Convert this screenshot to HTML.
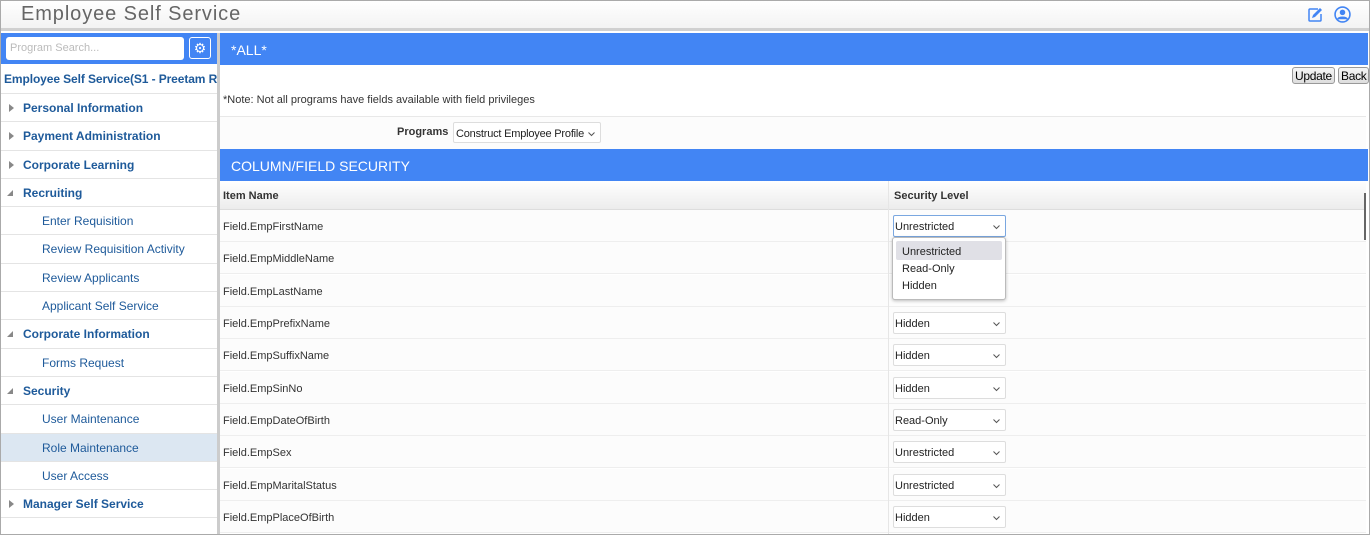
<!DOCTYPE html>
<html><head><style>
*{box-sizing:border-box;margin:0;padding:0}
body{width:1370px;height:535px;overflow:hidden;background:#fff;font-family:"Liberation Sans",Arial,sans-serif;position:relative}
.frame{position:absolute;left:0;top:0;width:1370px;height:535px;border:1px solid #aaa;z-index:5;pointer-events:none}
.hdr{position:absolute;left:1px;top:1px;width:1368px;height:30px;background:linear-gradient(#fff,#f3f3f3);border-bottom:3px solid #d0d0d0}
.hdr .t{position:absolute;left:20px;top:2px;font-size:20px;color:#666;letter-spacing:.9px}
.side{position:absolute;left:1px;top:33px;width:219px;height:501px;background:#fff;border-right:3px solid #ccc;z-index:2}
.sb{height:31px;background:#4285f4;position:relative}
.sb .in{position:absolute;left:5px;top:4px;width:178px;height:23px;background:#fff;border-radius:3px;font-size:11px;color:#bbb;padding:5px 4px}
.sb .g{position:absolute;left:188px;top:4px;width:22px;height:22px;border:1px solid #fff;border-radius:3px;color:#fff;font-size:14px;text-align:center;line-height:20px}
.ttl{height:30px;font-size:12px;font-weight:bold;color:#1e5a9a;padding:8px 3px;border-bottom:1px solid #e4e4e4;white-space:nowrap;overflow:hidden;letter-spacing:-.1px;width:216px}
.it{height:28.3px;border-bottom:1px solid #e4e4e4;font-size:12px;color:#1e5a9a;padding-top:7px;position:relative;width:216px}
.it.b{font-weight:bold;padding-left:22px}
.it.s{padding-left:41px}
.it.sel{background:#dce7f2}
.it.b:before{content:"";position:absolute;left:8px;top:10px;border-left:5px solid #888;border-top:4px solid transparent;border-bottom:4px solid transparent}
.it.o:before{border:none;width:0;height:0;border-right:6px solid #888;border-top:6px solid transparent;left:6px;top:11px}
.main{position:absolute;left:220px;top:33px;width:1148px;height:501px}
.bar{background:#4285f4;color:#fff;font-size:14px;padding:9px 11px;height:32px}
.btn{position:absolute;top:34px;height:17px;border:1px solid #999;border-radius:3px;background:linear-gradient(#f6f6f6,#ddd);font-size:12px;padding:1px 2px;letter-spacing:-.3px}
.sel2{position:absolute;height:22px;border:1px solid #ddd;border-radius:2px;background:#fff;font-size:11px;color:#222;padding:5px 1px 3px}
.sel2 svg{position:absolute;right:5px;top:9px}
.th{position:absolute;left:0;top:148px;width:1146px;height:29px;background:linear-gradient(#fff,#ececec);border-bottom:1px solid #ddd;font-size:11px;font-weight:bold;color:#333}
.row{position:absolute;left:0;width:1146px;height:32.3px;border-bottom:1px solid #eee;background:#fcfcfc;font-size:11px;color:#333}
.row span{position:absolute;left:3px;top:11px}
.vl{position:absolute;left:668px;top:148px;width:1px;height:353px;background:#e6e6e6}
</style></head><body>
<div class="frame"></div>
<div class="hdr"><div class="t">Employee Self Service</div>
<svg style="position:absolute;left:1306px;top:6px" width="16" height="16" viewBox="0 0 16 16"><path d="M11 2H3a1 1 0 0 0-1 1v10a1 1 0 0 0 1 1h10a1 1 0 0 0 1-1V7" fill="none" stroke="#4285f4" stroke-width="1.5"/><path d="M13 1l2 2-7 7-3 1 1-3z" fill="#4285f4"/></svg>
<svg style="position:absolute;left:1333px;top:5px" width="17" height="17" viewBox="0 0 16 16"><circle cx="8" cy="8" r="7" fill="none" stroke="#4285f4" stroke-width="1.5"/><circle cx="8" cy="6" r="2.6" fill="#4285f4"/><path d="M3.5 12.5c1-2.5 8-2.5 9 0" fill="#4285f4" stroke="#4285f4" stroke-width="1.5"/></svg>
</div>
<div class="side">
<div class="sb"><div class="in">Program Search...</div><div class="g">&#9881;</div></div>
<div class="ttl">Employee Self Service(S1 - Preetam Reddy)</div>
<div class="it b">Personal Information</div>
<div class="it b">Payment Administration</div>
<div class="it b">Corporate Learning</div>
<div class="it b o">Recruiting</div>
<div class="it s">Enter Requisition</div>
<div class="it s">Review Requisition Activity</div>
<div class="it s">Review Applicants</div>
<div class="it s">Applicant Self Service</div>
<div class="it b o">Corporate Information</div>
<div class="it s">Forms Request</div>
<div class="it b o">Security</div>
<div class="it s">User Maintenance</div>
<div class="it s sel">Role Maintenance</div>
<div class="it s">User Access</div>
<div class="it b">Manager Self Service</div>
</div>
<div class="main">
<div class="bar">*ALL*</div>
<div class="btn" style="left:1072px">Update</div>
<div class="btn" style="left:1118px">Back</div>
<div style="position:absolute;left:3px;top:61px;font-size:11px;color:#333">*Note: Not all programs have fields available with field privileges</div>
<div style="position:absolute;left:0;top:83px;width:1146px;height:33px;border-top:1px solid #e8e8e8;background:#fcfcfc">
<div style="position:absolute;left:177px;top:9px;font-size:11px;font-weight:bold;color:#333">Programs</div>
<div class="sel2" style="left:233px;top:5px;width:148px;height:21px;padding-left:2px;letter-spacing:-.2px">Construct Employee Profile<svg width="7" height="5" viewBox="0 0 7 5"><path d="M.5 .5l3 3 3-3" fill="none" stroke="#555"/></svg></div></div>
<div class="bar" style="position:absolute;top:116px;width:1148px">COLUMN/FIELD SECURITY</div>
<div class="th"><span style="position:absolute;left:3px;top:9px">Item Name</span><span style="position:absolute;left:674px;top:9px">Security Level</span></div>
<div style="position:absolute;left:1144px;top:160px;width:2px;height:47px;background:#666;z-index:3"></div>
<div class="row" style="top:177px"><span>Field.EmpFirstName</span></div>
<div class="row" style="top:209px"><span>Field.EmpMiddleName</span></div>
<div class="row" style="top:242px"><span>Field.EmpLastName</span></div>
<div class="row" style="top:274px"><span>Field.EmpPrefixName</span></div>
<div class="row" style="top:306px"><span>Field.EmpSuffixName</span></div>
<div class="row" style="top:339px"><span>Field.EmpSinNo</span></div>
<div class="row" style="top:371px"><span>Field.EmpDateOfBirth</span></div>
<div class="row" style="top:403px"><span>Field.EmpSex</span></div>
<div class="row" style="top:436px"><span>Field.EmpMaritalStatus</span></div>
<div class="row" style="top:468px"><span>Field.EmpPlaceOfBirth</span></div>
<div class="vl"></div>
<div class="sel2" style="left:673px;top:182px;width:113px;border-color:#7aa7e0">Unrestricted<svg width="7" height="5" viewBox="0 0 7 5"><path d="M.5 .5l3 3 3-3" fill="none" stroke="#555"/></svg></div>
<div class="sel2" style="left:673px;top:279px;width:113px">Hidden<svg width="7" height="5" viewBox="0 0 7 5"><path d="M.5 .5l3 3 3-3" fill="none" stroke="#555"/></svg></div>
<div class="sel2" style="left:673px;top:311px;width:113px">Hidden<svg width="7" height="5" viewBox="0 0 7 5"><path d="M.5 .5l3 3 3-3" fill="none" stroke="#555"/></svg></div>
<div class="sel2" style="left:673px;top:344px;width:113px">Hidden<svg width="7" height="5" viewBox="0 0 7 5"><path d="M.5 .5l3 3 3-3" fill="none" stroke="#555"/></svg></div>
<div class="sel2" style="left:673px;top:376px;width:113px">Read-Only<svg width="7" height="5" viewBox="0 0 7 5"><path d="M.5 .5l3 3 3-3" fill="none" stroke="#555"/></svg></div>
<div class="sel2" style="left:673px;top:408px;width:113px">Unrestricted<svg width="7" height="5" viewBox="0 0 7 5"><path d="M.5 .5l3 3 3-3" fill="none" stroke="#555"/></svg></div>
<div class="sel2" style="left:673px;top:441px;width:113px">Unrestricted<svg width="7" height="5" viewBox="0 0 7 5"><path d="M.5 .5l3 3 3-3" fill="none" stroke="#555"/></svg></div>
<div class="sel2" style="left:673px;top:473px;width:113px">Hidden<svg width="7" height="5" viewBox="0 0 7 5"><path d="M.5 .5l3 3 3-3" fill="none" stroke="#555"/></svg></div>
<div style="position:absolute;left:672px;top:204px;width:114px;height:63px;background:#fff;border:1px solid #bbb;border-radius:3px;box-shadow:0 1px 3px rgba(0,0,0,.25);font-size:11px;color:#222">
<div style="margin:3px 3px 0 3px;background:#e0e0e6;border-radius:2px;padding:5px 6px 3px;height:19px">Unrestricted</div>
<div style="padding:3px 9px">Read-Only</div>
<div style="padding:2px 9px">Hidden</div></div>
</div>
</body></html>
